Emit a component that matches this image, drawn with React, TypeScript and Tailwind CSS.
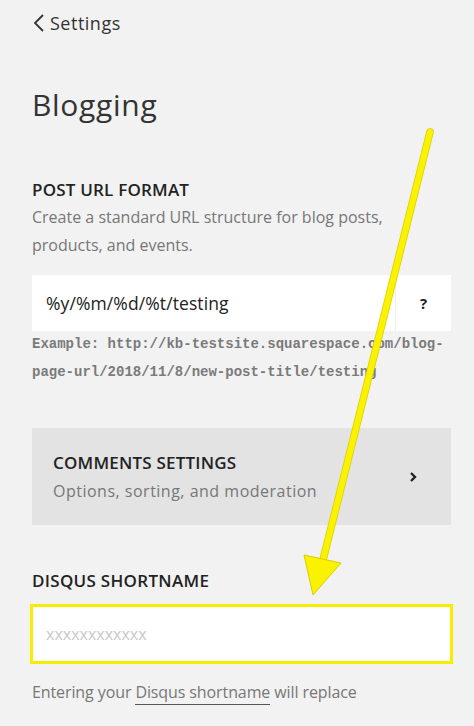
import React from "react";

export default function App() {
  return (
    <div
      className="relative h-[726px] w-full overflow-hidden bg-[#f2f2f2] text-[#333]"
      style={{ fontFamily: "'Open Sans', Lato, sans-serif" }}
    >
      <div className="flex flex-col px-8 pr-[23px]">
        {/* Back link */}
        <div className="mt-[11px] flex h-6 items-center gap-[5px] text-[18px] tracking-[0.5px] text-[#333]">
          <svg width="12" height="20" viewBox="0 0 12 20" className="ml-[1px]">
            <path d="M10 2 L2 10 L10 18" fill="none" stroke="#333" strokeWidth="1.8" />
          </svg>
          <span>Settings</span>
        </div>

        <h1 className="mt-[52px] text-[30px] leading-[36px] tracking-[0.7px] text-[#333]">Blogging</h1>

        {/* Post URL format */}
        <h2 className="mt-[56px] text-[17px] font-semibold leading-[22px] tracking-[0.2px] text-[#222]">
          POST URL FORMAT
        </h2>
        <p className="mt-[2px] text-[16px] leading-[28px] text-[#777]">
          Create a standard URL structure for blog posts, products, and events.
        </p>

        <div className="mt-[16px] flex h-[56px] bg-white">
          <div className="flex flex-1 items-center pl-[14px] text-[17.5px] tracking-[0.1px] text-[#222]">
            %y/%m/%d/%t/testing
          </div>
          <div className="flex w-[56px] items-center justify-center border-l border-[#eee] text-[15px] font-bold text-[#222]">
            ?
          </div>
        </div>
        <p
          className="mt-[-1px] text-[14px] font-bold leading-[28px] text-[#7a7a7a]"
          style={{ fontFamily: "'Liberation Mono', monospace" }}
        >
          Example: http://kb-testsite.squarespace.com/blog-page-url/2018/11/8/new-post-title/testing
        </p>

        {/* Comments settings */}
        <div className="mt-[42px] flex h-[97px] items-center justify-between bg-[#e3e3e3] pl-[21px] pr-[34px]">
          <div>
            <div className="text-[17px] font-semibold leading-[24px] tracking-[0.2px] text-[#222]">
              COMMENTS SETTINGS
            </div>
            <div className="mt-[4px] text-[16px] leading-[24px] tracking-[0.5px] text-[#777]">
              Options, sorting, and moderation
            </div>
          </div>
          <svg width="8" height="12" viewBox="0 0 8 12">
            <path d="M2 2 L6 6 L2 10" fill="none" stroke="#222" strokeWidth="2.4" />
          </svg>
        </div>

        {/* Disqus */}
        <h2 className="mt-[45px] text-[17px] font-semibold leading-[22px] tracking-[0.3px] text-[#222]">
          DISQUS SHORTNAME
        </h2>
        <div className="-mx-[2px] mt-[12px] flex h-[60px] items-center border-[3px] border-[#f5ee00] bg-white pl-[13px] text-[16px] text-[#c8c8c8]">
          xxxxxxxxxxxx
        </div>
        <p className="mt-[16px] text-[16px] leading-[24px] tracking-[-0.1px] text-[#777]">
          Entering your{" "}
          <span className="border-b border-[#555] pb-[1px]">Disqus shortname</span> will replace
        </p>
      </div>

      {/* Annotation arrow */}
      <svg className="pointer-events-none absolute left-0 top-0" width="474" height="726" viewBox="0 0 474 726">
        <line x1="430" y1="132" x2="323" y2="560" stroke="#d8cf00" strokeWidth="7.5" strokeLinecap="round" />
        <line x1="430" y1="132" x2="323" y2="560" stroke="#fbf200" strokeWidth="6" strokeLinecap="round" />
        <polygon points="304,555 341,563 313,595" fill="#fbf200" stroke="#d8cf00" strokeWidth="1" strokeLinejoin="round" />
      </svg>
    </div>
  );
}
